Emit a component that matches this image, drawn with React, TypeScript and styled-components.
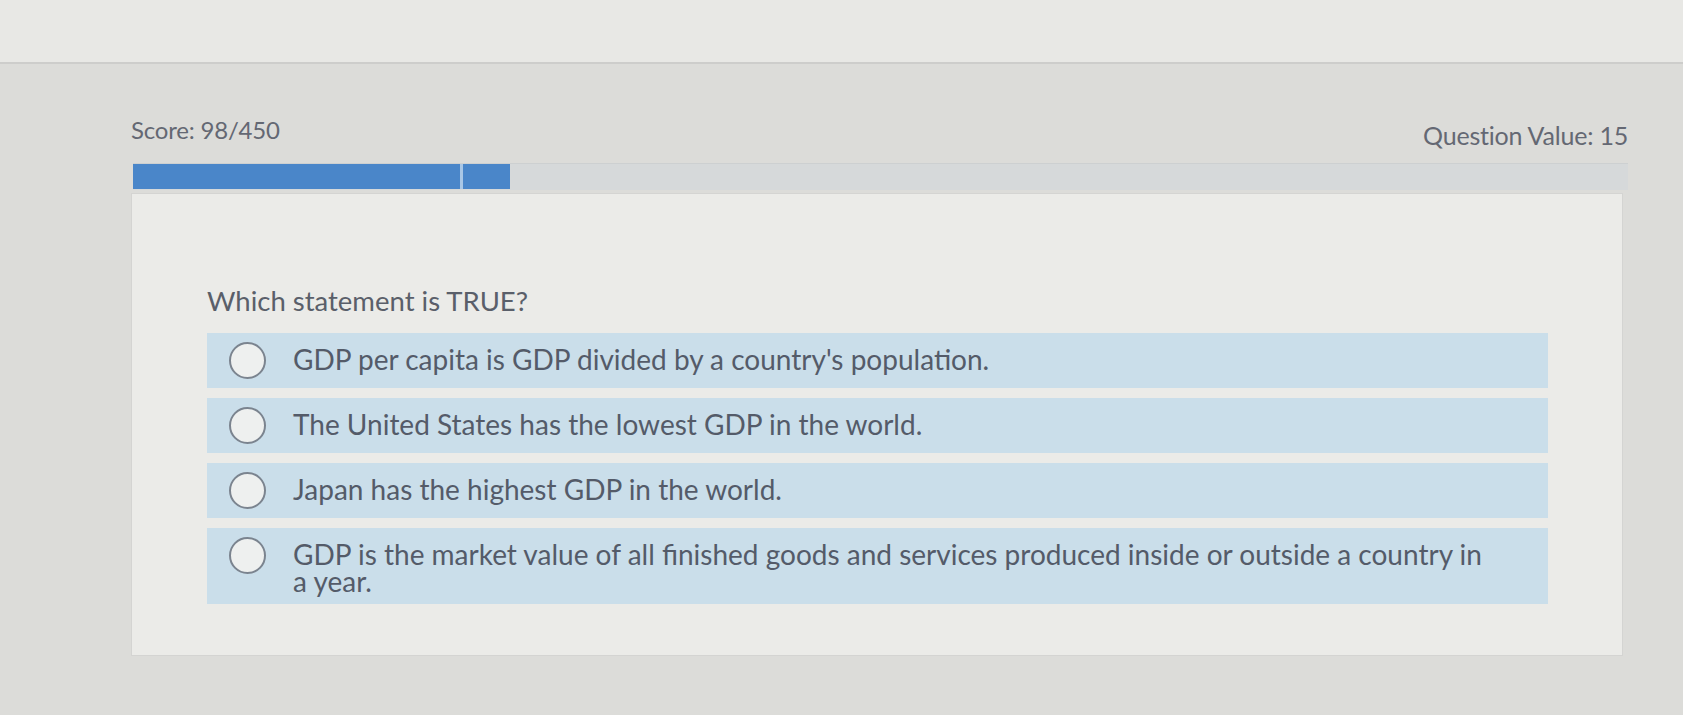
import React from "react";
import styled, { createGlobalStyle } from "styled-components";

const Global = createGlobalStyle`
  html, body { margin: 0; padding: 0; }
  body {
    width: 1683px;
    height: 715px;
    overflow: hidden;
    background: #dddddb;
    font-family: "Lato", "Liberation Sans", sans-serif;
  }
`;

const Page = styled.div`
  width: 1683px;
  height: 715px;
  display: flex;
  flex-direction: column;
  background: #dcdcd9;
`;

const TopStrip = styled.div`
  height: 62px;
  flex: none;
  background: #e8e8e5;
  border-bottom: 2px solid #cdcdcb;
`;

const Main = styled.main`
  display: flex;
  flex-direction: column;
  padding: 0 55px 0 131px;
`;

const Header = styled.div`
  display: flex;
  justify-content: space-between;
  align-items: flex-start;
  margin-top: 51px;
  height: 41px;
  color: #646873;
`;

const HeaderText = styled.span<{ $size: number; $shift?: number }>`
  font-size: ${(p) => p.$size}px;
  line-height: 30px;
  padding-top: ${(p) => p.$shift ?? 0}px;
  letter-spacing: -0.2px;
`;

const Track = styled.div`
  display: flex;
  margin: 7px 0 0 2px;
  height: 26px;
  background: #d6d9da;
  border-top: 1px solid #cdd0d1;
`;

const Segment = styled.div<{ $w: number }>`
  width: ${(p) => p.$w}px;
  height: 25px;
  background: #4a86c9;
  border-right: 3px solid #a9c7e6;
  &:last-child { border-right: none; }
`;

const Card = styled.section`
  margin-top: 3px;
  width: 1492px;
  height: 463px;
  box-sizing: border-box;
  background: #ebebe8;
  border: 1px solid #d4d4d2;
  padding: 91px 74px 0 75px;
  display: flex;
  flex-direction: column;
`;

const Question = styled.div`
  font-size: 27.5px;
  line-height: 32px;
  color: #5a5f6a;
  margin-bottom: 16px;
`;

const Options = styled.div`
  display: flex;
  flex-direction: column;
  gap: 10px;
`;

const Option = styled.label`
  display: flex;
  align-items: flex-start;
  min-height: 55px;
  box-sizing: border-box;
  padding: 9px 40px 9px 22px;
  background: #cadeea;
  cursor: pointer;
`;

const Radio = styled.span`
  flex: none;
  width: 33px;
  height: 33px;
  border-radius: 50%;
  border: 2px solid #7b848f;
  background: #eef0ef;
  margin-right: 27px;
`;

const OptionText = styled.span`
  font-size: 28px;
  line-height: 27px;
  color: #545b69;
  max-width: 1198px;
  padding-top: 4px;
`;

const options = [
  "GDP per capita is GDP divided by a country's population.",
  "The United States has the lowest GDP in the world.",
  "Japan has the highest GDP in the world.",
  "GDP is the market value of all finished goods and services produced inside or outside a country in a year.",
];

export default function App() {
  return (
    <>
      <Global />
      <Page>
        <TopStrip />
        <Main>
          <Header>
            <HeaderText $size={24}>Score: 98/450</HeaderText>
            <HeaderText $size={25} $shift={5}>
              Question Value: 15
            </HeaderText>
          </Header>
          <Track>
            <Segment $w={327} />
            <Segment $w={47} />
          </Track>
          <Card>
            <Question>Which statement is TRUE?</Question>
            <Options>
              {options.map((o) => (
                <Option key={o}>
                  <Radio />
                  <OptionText>{o}</OptionText>
                </Option>
              ))}
            </Options>
          </Card>
        </Main>
      </Page>
    </>
  );
}
